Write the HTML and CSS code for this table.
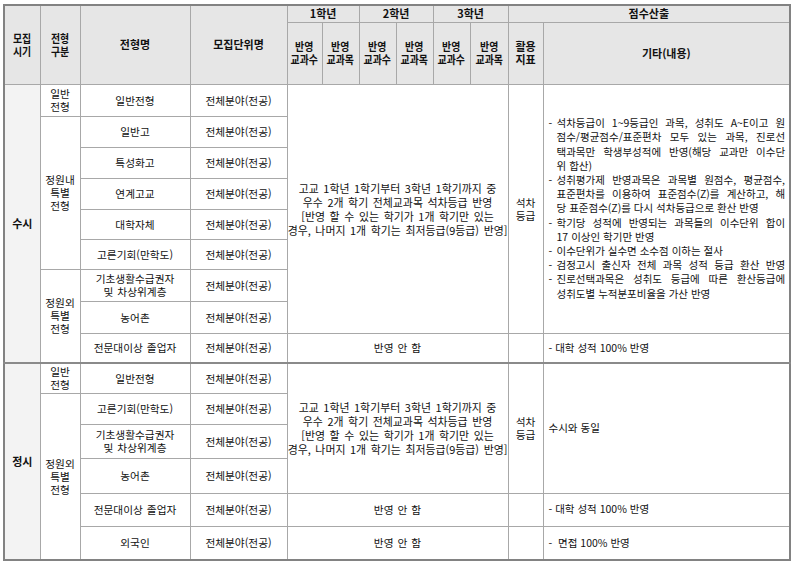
FILE: index.html
```html
<!DOCTYPE html>
<html lang="ko">
<head>
<meta charset="utf-8">
<title>학생부 반영 방법</title>
<link rel="stylesheet" href="styles.css">
</head>
<body>
<div class="wrap">
<table class="grid">
  <colgroup>
    <col class="c-period"><col class="c-type"><col class="c-name"><col class="c-unit">
    <col class="c-g1a"><col class="c-g1b"><col class="c-g2a"><col class="c-g2b"><col class="c-g3a"><col class="c-g3b">
    <col class="c-idx"><col class="c-etc">
  </colgroup>
  <thead>
    <tr class="h17">
      <th rowspan="2"><span class="sq">모집<br>시기</span></th>
      <th rowspan="2"><span class="sq">전형<br>구분</span></th>
      <th rowspan="2">전형명</th>
      <th rowspan="2">모집단위명</th>
      <th colspan="2">1학년</th>
      <th colspan="2">2학년</th>
      <th colspan="2">3학년</th>
      <th colspan="2">점수산출</th>
    </tr>
    <tr class="h62">
      <th><span class="sq">반영<br>교과수</span></th>
      <th><span class="sq">반영<br>교과목</span></th>
      <th><span class="sq">반영<br>교과수</span></th>
      <th><span class="sq">반영<br>교과목</span></th>
      <th><span class="sq">반영<br>교과수</span></th>
      <th><span class="sq">반영<br>교과목</span></th>
      <th>활용<br>지표</th>
      <th>기타(내용)</th>
    </tr>
  </thead>
  <tbody>
    <tr class="h32">
      <td rowspan="9" class="period">수시</td>
      <td>일반<br>전형</td>
      <td>일반전형</td>
      <td>전체분야(전공)</td>
      <td colspan="6" rowspan="8" class="big">고교 1학년 1학기부터 3학년 1학기까지 중<br>우수 2개 학기 전체교과목 석차등급 반영<br>[반영 할 수 있는 학기가 1개 학기만 있는<br>경우, 나머지 1개 학기는 최저등급(9등급) 반영]</td>
      <td rowspan="8">석차<br>등급</td>
      <td rowspan="8" class="etc">
        <div class="item"><span class="dash">-</span><div class="lines"><span class="ln">석차등급이 1~9등급인 과목, 성취도 A~E이고 원</span><span class="ln">점수/평균점수/표준편차 모두 있는 과목, 진로선</span><span class="ln">택과목만 학생부성적에 반영(해당 교과만 이수단</span><span class="ln end">위 합산)</span></div></div>
        <div class="item"><span class="dash">-</span><div class="lines"><span class="ln">성취평가제 반영과목은 과목별 원점수, 평균점수,</span><span class="ln">표준편차를 이용하여 표준점수(Z)를 계산하고, 해</span><span class="ln end">당 표준점수(Z)를 다시 석차등급으로 환산 반영</span></div></div>
        <div class="item"><span class="dash">-</span><div class="lines"><span class="ln">학기당 성적에 반영되는 과목들의 이수단위 합이</span><span class="ln end">17 이상인 학기만 반영</span></div></div>
        <div class="item"><span class="dash">-</span><div class="lines"><span class="ln end">이수단위가 실수면 소수점 이하는 절사</span></div></div>
        <div class="item"><span class="dash">-</span><div class="lines"><span class="ln">검정고시 출신자 전체 과목 성적 등급 환산 반영</span></div></div>
        <div class="item"><span class="dash">-</span><div class="lines"><span class="ln">진로선택과목은 성취도 등급에 따른 환산등급에</span><span class="ln end">성취도별 누적분포비율을 가산 반영</span></div></div>
      </td>
    </tr>
    <tr class="h31">
      <td rowspan="5">정원내<br>특별<br>전형</td>
      <td>일반고</td>
      <td>전체분야(전공)</td>
    </tr>
    <tr class="h31">
      <td>특성화고</td>
      <td>전체분야(전공)</td>
    </tr>
    <tr class="h31">
      <td>연계고교</td>
      <td>전체분야(전공)</td>
    </tr>
    <tr class="h30">
      <td>대학자체</td>
      <td>전체분야(전공)</td>
    </tr>
    <tr class="h30">
      <td>고른기회(만학도)</td>
      <td>전체분야(전공)</td>
    </tr>
    <tr class="h32">
      <td rowspan="3">정원외<br>특별<br>전형</td>
      <td>기초생활수급권자<br>및 차상위계층</td>
      <td>전체분야(전공)</td>
    </tr>
    <tr class="h32">
      <td>농어촌</td>
      <td>전체분야(전공)</td>
    </tr>
    <tr class="h30">
      <td>전문대이상 졸업자</td>
      <td>전체분야(전공)</td>
      <td colspan="6">반영 안 함</td>
      <td></td>
      <td class="etc">- 대학 성적 100% 반영</td>
    </tr>

    <tr class="h30 sep">
      <td rowspan="6" class="period">정시</td>
      <td>일반<br>전형</td>
      <td>일반전형</td>
      <td>전체분야(전공)</td>
      <td colspan="6" rowspan="4" class="big">고교 1학년 1학기부터 3학년 1학기까지 중<br>우수 2개 학기 전체교과목 석차등급 반영<br>[반영 할 수 있는 학기가 1개 학기만 있는<br>경우, 나머지 1개 학기는 최저등급(9등급) 반영]</td>
      <td rowspan="4">석차<br>등급</td>
      <td rowspan="4" class="etc">수시와 동일</td>
    </tr>
    <tr class="h31">
      <td rowspan="5">정원외<br>특별<br>전형</td>
      <td>고른기회(만학도)</td>
      <td>전체분야(전공)</td>
    </tr>
    <tr class="h34">
      <td>기초생활수급권자<br>및 차상위계층</td>
      <td>전체분야(전공)</td>
    </tr>
    <tr class="h35">
      <td>농어촌</td>
      <td>전체분야(전공)</td>
    </tr>
    <tr class="h33">
      <td>전문대이상 졸업자</td>
      <td>전체분야(전공)</td>
      <td colspan="6">반영 안 함</td>
      <td></td>
      <td class="etc">- 대학 성적 100% 반영</td>
    </tr>
    <tr class="h34">
      <td>외국인</td>
      <td>전체분야(전공)</td>
      <td colspan="6">반영 안 함</td>
      <td></td>
      <td class="etc">-&nbsp; 면접 100% 반영</td>
    </tr>
  </tbody>
</table>
</div>
</body>
</html>
```

FILE: styles.css
```css
html, body {
  margin: 0;
  padding: 0;
  background: #ffffff;
}
.wrap {
  padding: 4px 0 0 3px;
}
.grid {
  width: 788px;
  table-layout: fixed;
  border-collapse: collapse;
  border: 2px solid #828282;
  font-family: "Noto Sans CJK KR", "Noto Sans", sans-serif;
  font-size: 10.7px;
  line-height: 13px;
  color: #111111;
}
.c-period { width: 36px; }
.c-type { width: 40px; }
.c-name { width: 110px; }
.c-unit { width: 97px; }
.c-g1a { width: 35px; }
.c-g1b { width: 37px; }
.c-g2a { width: 37px; }
.c-g2b { width: 37px; }
.c-g3a { width: 37px; }
.c-g3b { width: 38px; }
.c-idx { width: 35px; }
.c-etc { width: 247px; }

.grid th, .grid td {
  border: 1px solid #a8a8a8;
  padding: 0;
  text-align: center;
  vertical-align: middle;
  word-spacing: 1px;
}
.grid th {
  background: #e6e6e6;
  font-weight: 700;
  font-size: 11px;
  color: #111111;
}
.sq {
  display: inline-block;
  transform: scaleX(0.9);
  white-space: nowrap;
}
.h17 { height: 17px; }
.h62 { height: 62px; }
.h30 { height: 30px; }
.h31 { height: 31px; }
.h32 { height: 32px; }
.h33 { height: 33px; }
.h34 { height: 34px; }
.h35 { height: 35px; }

.grid td.period {
  background: #f3f3f3;
  font-weight: 700;
  font-size: 11px;
}
.sep > td {
  border-top: 2px solid #8a8a8a;
}
.grid td.big {
  white-space: nowrap;
  line-height: 14px;
  font-size: 10.9px;
  word-spacing: 1.6px;
}
.grid td.etc {
  text-align: left;
  padding: 0 4px 0 5px;
  line-height: 14.2px;
  font-size: 10.5px;
  word-spacing: 0;
}
.item {
  display: flex;
}
.dash {
  flex: none;
  width: 8px;
}
.lines {
  flex: 1;
  min-width: 0;
}
.ln {
  display: block;
  text-align: justify;
  text-align-last: justify;
}
.ln.end {
  text-align-last: left;
}
```
